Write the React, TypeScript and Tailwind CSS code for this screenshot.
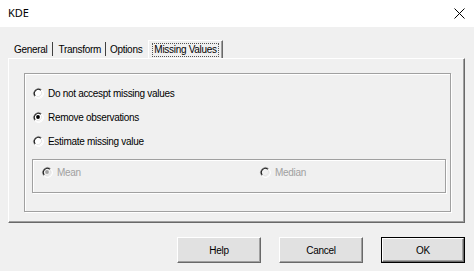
import React from "react";

// Boîte de dialogue KDE — onglet "Missing Values" (style Windows classique)

function Radio({ checked, disabled }: { checked?: boolean; disabled?: boolean }) {
  return (
    <svg width="12" height="12" viewBox="0 0 12 12" className="shrink-0" aria-hidden>
      <circle cx="6" cy="6" r="5" fill={disabled ? "#f0f0f0" : "#ffffff"} />
      <path d="M2.5 9.5 A5 5 0 0 1 9.5 2.5" fill="none" stroke="#9a9a9a" strokeWidth="1" />
      <path d="M3.2 8.8 A4 4 0 0 1 8.8 3.2" fill="none" stroke="#202020" strokeWidth="1.1" />
      <path d="M10.5 3.5 A5 5 0 0 1 3.5 10.5" fill="none" stroke="#ffffff" strokeWidth="1" />
      <path d="M9.5 4.5 A4 4 0 0 1 4.5 9.5" fill="none" stroke="#e3e3e3" strokeWidth="1" />
      {checked && <circle cx="6" cy="6" r="1.9" fill={disabled ? "#a0a0a0" : "#000000"} />}
    </svg>
  );
}

function Option({
  label,
  checked,
  disabled,
}: {
  label: string;
  checked?: boolean;
  disabled?: boolean;
}) {
  return (
    <div className="flex h-[24px] items-center gap-[4px]">
      <Radio checked={checked} disabled={disabled} />
      <span className={disabled ? "text-[#a0a0a0]" : "text-black"}>{label}</span>
    </div>
  );
}

function Button({ label, primary }: { label: string; primary?: boolean }) {
  return (
    <div
      className={
        primary
          ? "h-[26px] w-[84px] border border-black bg-[#e1e1e1]"
          : "h-[26px] w-[84px] bg-[#e1e1e1]"
      }
    >
      <div className="flex h-full w-full items-center justify-center border-t border-l border-white border-r border-b border-r-[#696969] border-b-[#696969] shadow-[inset_-1px_-1px_0_#a0a0a0]">
        {label}
      </div>
    </div>
  );
}

export default function App() {
  return (
    <div
      className="h-[271px] w-[474px] overflow-hidden bg-[#f0f0f0] text-[10px] tracking-[-0.3px] text-black"
      style={{ fontFamily: '"Liberation Sans", Arial, sans-serif' }}
    >
      {/* Barre de titre */}
      <div className="flex h-[27px] items-center justify-between bg-white pl-[8px] pr-[9px] tracking-normal">
        <span className="text-[11px]" style={{ fontFamily: '"Noto Sans", sans-serif' }}>
          KDE
        </span>
        <svg width="11" height="11" viewBox="0 0 11 11" aria-hidden>
          <path d="M0.5 0.5 L10.5 10.5 M10.5 0.5 L0.5 10.5" stroke="#000" strokeWidth="1" />
        </svg>
      </div>

      {/* Onglets */}
      <div className="ml-[8px] mt-[13px] flex h-[18px] items-end">
        <div className="flex h-[18px] items-center pl-[6px]">
          <span className="pr-[5px]">General</span>
          <span className="h-[14px] w-px bg-[#404040]" />
        </div>
        <div className="flex h-[18px] items-center pl-[5px]">
          <span className="pr-[4px]">Transform</span>
          <span className="h-[14px] w-px bg-[#404040]" />
        </div>
        <div className="flex h-[18px] items-center pl-[4px] pr-[6px]">
          <span>Options</span>
        </div>
        <div className="flex h-[18px] items-center border-t border-l border-white border-r border-r-[#696969] px-[3px] shadow-[inset_-1px_0_0_#a0a0a0]">
          <span className="border border-dotted border-[#555] px-[1px] leading-[12px]">Missing Values</span>
        </div>
      </div>

      {/* Panneau */}
      <div className="ml-[8px] h-[165px] w-[457px] border-t border-l border-white border-r border-b border-r-[#696969] border-b-[#696969]">
        <div className="h-full w-full border-r border-b border-r-[#a0a0a0] border-b-[#a0a0a0] pl-[15px] pt-[14px]">
          <div className="h-[139px] w-[427px] border border-[#a0a0a0] pl-[7px] pt-[7px] shadow-[inset_1px_1px_0_#fff,1px_1px_0_#fff]">
            <Option label="Do not accespt missing values" />
            <Option label="Remove observations" checked />
            <Option label="Estimate missing value" />

            <div className="mt-[6px] flex h-[34px] w-[414px] items-start border border-[#a0a0a0] pl-[8px] shadow-[inset_1px_1px_0_#fff,1px_1px_0_#fff]">
              <div className="w-[218px]">
                <Option label="Mean" checked disabled />
              </div>
              <Option label="Median" disabled />
            </div>
          </div>
        </div>
      </div>

      {/* Boutons */}
      <div className="mt-[14px] flex justify-end gap-[18px] pr-[9px]">
        <Button label="Help" />
        <Button label="Cancel" />
        <Button label="OK" primary />
      </div>
    </div>
  );
}
